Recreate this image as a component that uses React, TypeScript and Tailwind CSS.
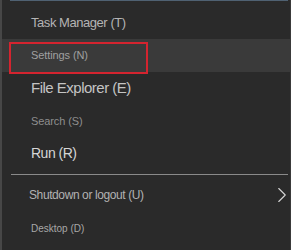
import { ChevronRight } from "lucide-react";

const items = [
  { label: "Task Manager (T)", cls: "h-[32px] text-[13px] tracking-[-0.45px] text-[#b4b4b4]" },
  { label: "Settings (N)", cls: "h-[33px] text-[11px] tracking-[-0.1px] text-[#a0a0a0] bg-[#3a3a3a]" },
  { label: "File Explorer (E)", cls: "h-[33px] text-[15px] tracking-[-0.5px] text-[#c4c4c4]" },
  { label: "Search (S)", cls: "h-[32px] text-[11px] tracking-[-0.1px] text-[#8e8e8e]" },
  { label: "Run (R)", cls: "h-[32px] text-[14px] tracking-[-0.5px] text-[#d6d6d6]" },
];

export default function App() {
  return (
    <div
      className="relative w-[291px] h-[250px] overflow-hidden bg-[#2a2a2a] border-l-[2px] border-r border-l-[#474747] border-r-[#3a3a3a]"
      style={{ fontFamily: '"Liberation Sans", Arial, sans-serif' }}
    >
      <div className="ml-[8px] mr-[2px] h-[1px] bg-[#4f6172]" />
      <div className="pt-[6px]">
        {items.map((it) => (
          <div key={it.label} className={`flex items-center pl-[29px] ${it.cls}`}>
            {it.label}
          </div>
        ))}
      </div>
      <div className="mt-[5px] ml-[9px] mr-[2px] h-[1px] bg-[#8a8a8a]" />
      <div className="flex items-center justify-between h-[40px] pl-[27px] text-[12px] tracking-[-0.4px] text-[#b2b2b2]">
        <span>Shutdown or logout (U)</span>
        <ChevronRight className="w-[26px] h-[26px] mr-[-5px] text-[#d4d4d4]" strokeWidth={1} />
      </div>
      <div className="flex items-center h-[27px] pl-[29px] text-[10px] text-[#a8a8a8]">
        Desktop (D)
      </div>
      <div className="absolute left-[7px] top-[42px] w-[139px] h-[32px] border-2 border-[#d4242f]" />
    </div>
  );
}
